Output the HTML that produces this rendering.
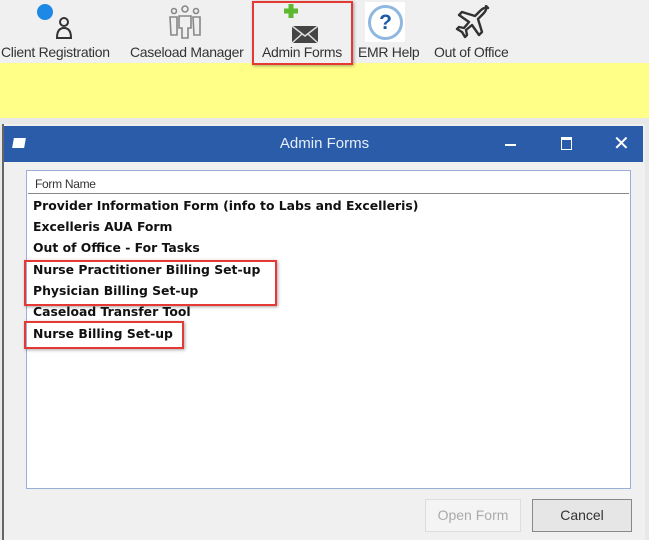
<!DOCTYPE html><html><head><style>
body{margin:0;width:649px;height:540px;overflow:hidden;background:#e8e8e8;font-family:"Liberation Sans",sans-serif;position:relative}
.a{position:absolute}
.tb{left:0;top:0;width:649px;height:63px;background:#f0f0f0}
.lbl{font-size:14px;color:#333;top:44px;white-space:nowrap;letter-spacing:-0.3px}
.row{position:absolute;left:33px;font-family:"DejaVu Sans",sans-serif;font-weight:bold;font-size:12.4px;color:#111;white-space:nowrap}
.red{position:absolute;border:2px solid #e53935;box-shadow:1px 1px 3px rgba(0,0,0,.35)}
</style></head><body>
<div class="a tb"></div>
<div class="a" style="left:0;top:63px;width:649px;height:55px;background:#ffff88"></div>
<div class="a" style="left:37px;top:4px;width:16px;height:16px;border-radius:50%;background:#1e88e5"></div>
<svg class="a" style="left:54px;top:16px" width="20" height="24"><circle cx="10" cy="6" r="4" fill="none" stroke="#333" stroke-width="2"/><path d="M3 22 Q3 12 10 12 Q17 12 17 22 Z" fill="none" stroke="#333" stroke-width="2"/></svg>
<svg class="a" style="left:165px;top:4px" width="40" height="36" fill="none" stroke="#888" stroke-width="1.6"><circle cx="20" cy="5" r="3"/><circle cx="9" cy="7" r="2.5"/><circle cx="31" cy="7" r="2.5"/><path d="M14 12h12v12h-3v10h-6V24h-3z"/><path d="M5 13h7v18H6zM28 13h7v18h-6z"/></svg>
<svg class="a" style="left:280px;top:4px" width="40" height="40"><path d="M4 7h14M11 0v14" stroke="#5cb82e" stroke-width="5"/><rect x="12" y="22" width="26" height="17" fill="#444"/><path d="M12 22l13 10 13-10M12 39l10-9M38 39l-10-9" stroke="#ddd" stroke-width="1.5" fill="none"/></svg>
<div class="a" style="left:365px;top:2px;width:40px;height:40px;background:#fff"></div>
<div class="a" style="left:368px;top:5px;width:29px;height:29px;border:3px solid #8fb8e0;border-radius:50%;color:#1f5aa6;font:bold 21px 'Liberation Sans';text-align:center;line-height:29px">?</div>
<svg class="a" style="left:455px;top:5px" width="38" height="36" fill="none" stroke="#333" stroke-width="2.4" stroke-linejoin="round"><path d="M33 3c-3-1-6 1-8 3l-5 5-13-4-3 3 10 7-5 6-5-1-2 2 5 3 3 5 2-2-1-5 6-5 7 10 3-3-4-13 5-5c2-2 4-5 3-8z"/></svg>
<div class="a lbl" style="left:1px">Client Registration</div>
<div class="a lbl" style="left:130px">Caseload Manager</div>
<div class="a lbl" style="left:262px">Admin Forms</div>
<div class="a lbl" style="left:358px">EMR Help</div>
<div class="a lbl" style="left:434px">Out of Office</div>
<div class="red" style="left:252px;top:1px;width:97px;height:60px"></div>
<div class="a" style="left:2px;top:124px;width:641px;height:416px;background:#f0f0f0;border-left:2px solid #666"></div>
<div class="a" style="left:4px;top:126px;width:639px;height:36px;background:#2a5caa"></div>
<div class="a" style="left:13px;top:138px;width:12px;height:10px;background:#fff;transform:skewX(-10deg)"></div>
<div class="a" style="left:0;width:649px;top:135px;text-align:center;color:#e8eef8;font-size:15px">Admin Forms</div>
<div class="a" style="left:505px;top:144px;width:11px;height:2px;background:#fff"></div>
<div class="a" style="left:561px;top:137px;width:9px;height:9px;border:1.5px solid #fff;border-top-width:3px"></div>
<div class="a" style="left:613px;top:131px;color:#fff;font-size:20px">✕</div>
<div class="a" style="left:26px;top:170px;width:603px;height:317px;background:#fff;border:1px solid #98b0d8"></div>
<div class="a" style="left:28px;top:193px;width:601px;height:1px;background:#888"></div>
<div class="a" style="left:35px;top:177px;font-size:12px;color:#333;letter-spacing:-0.3px">Form Name</div>
<div class="row" style="top:198px">Provider Information Form (info to Labs and Excelleris)</div>
<div class="row" style="top:219px">Excelleris AUA Form</div>
<div class="row" style="top:240px">Out of Office - For Tasks</div>
<div class="row" style="top:262px">Nurse Practitioner Billing Set-up</div>
<div class="row" style="top:283px">Physician Billing Set-up</div>
<div class="row" style="top:304px">Caseload Transfer Tool</div>
<div class="row" style="top:326px">Nurse Billing Set-up</div>
<div class="red" style="left:24px;top:260px;width:249px;height:42px"></div>
<div class="red" style="left:24px;top:321px;width:156px;height:24px"></div>
<div class="a" style="left:425px;top:499px;width:94px;height:31px;border:1px solid #ddd;background:#f4f4f4;color:#aaa;font-size:14px;text-align:center;line-height:31px">Open Form</div>
<div class="a" style="left:532px;top:499px;width:98px;height:31px;border:1px solid #888;background:#e6e6e6;color:#333;font-size:14px;text-align:center;line-height:31px">Cancel</div>
</body></html>
